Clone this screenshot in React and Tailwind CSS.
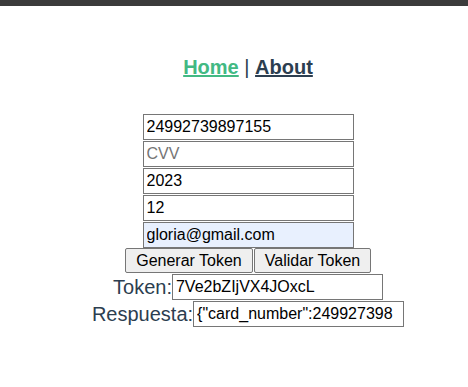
import React from 'react';

const inputCls =
    "block h-[26px] border border-[#767676] px-[3px] text-[16px] text-black outline-none placeholder:text-[#757575]";

export default function App() {
    return (
        <div className="min-h-screen bg-white font-['Liberation_Sans',Arial,sans-serif] text-[#2c3e50]">

            {/* top bar */}
            <div className="h-[6px] bg-[#3b3b3b]" />

            <div className="pl-[28px] flex flex-col items-center">

                {/* nav */}
                <nav className="pt-[50px] text-[20px] leading-[23px] font-bold">
                    <a className="text-[#42b983] underline">Home</a>
                    <span className="font-normal"> | </span>
                    <a className="text-[#2c3e50] underline">About</a>
                </nav>

                {/* form */}
                <div className="mt-[35px] flex flex-col items-center gap-[1px]">
                    <input className={`${inputCls} w-[211px] bg-white`} defaultValue="24992739897155" />
                    <input className={`${inputCls} w-[211px] bg-white`} placeholder="CVV" />
                    <input className={`${inputCls} w-[211px] bg-white`} defaultValue="2023" />
                    <input className={`${inputCls} w-[211px] bg-white`} defaultValue="12" />
                    <input className={`${inputCls} w-[211px] bg-[#e8f0fe]`} defaultValue="gloria@gmail.com" />
                </div>

                <div className="flex">
                    <button className="h-[25px] w-[128px] bg-[#efefef] border border-[#767676] rounded-[2px] text-[16px] text-black">
                        Generar Token
                    </button>
                    <button className="ml-[1px] h-[25px] w-[117px] bg-[#efefef] border border-[#767676] rounded-[2px] text-[16px] text-black">
                        Validar Token
                    </button>
                </div>

                <div className="flex items-center mt-[1px]">
                    <span className="text-[20px] leading-[23px] text-[#2c3e50]">Token:</span>
                    <input className={`${inputCls} w-[211px] bg-white`} defaultValue="7Ve2bZIjVX4JOxcL" />
                </div>

                <div className="flex items-center mt-[1px]">
                    <span className="text-[20px] leading-[23px] text-[#2c3e50]">Respuesta:</span>
                    <input className={`${inputCls} w-[211px] h-[25px] bg-white`} defaultValue={'{"card_number":249927398'} />
                </div>
            </div>
        </div>
    );
}
